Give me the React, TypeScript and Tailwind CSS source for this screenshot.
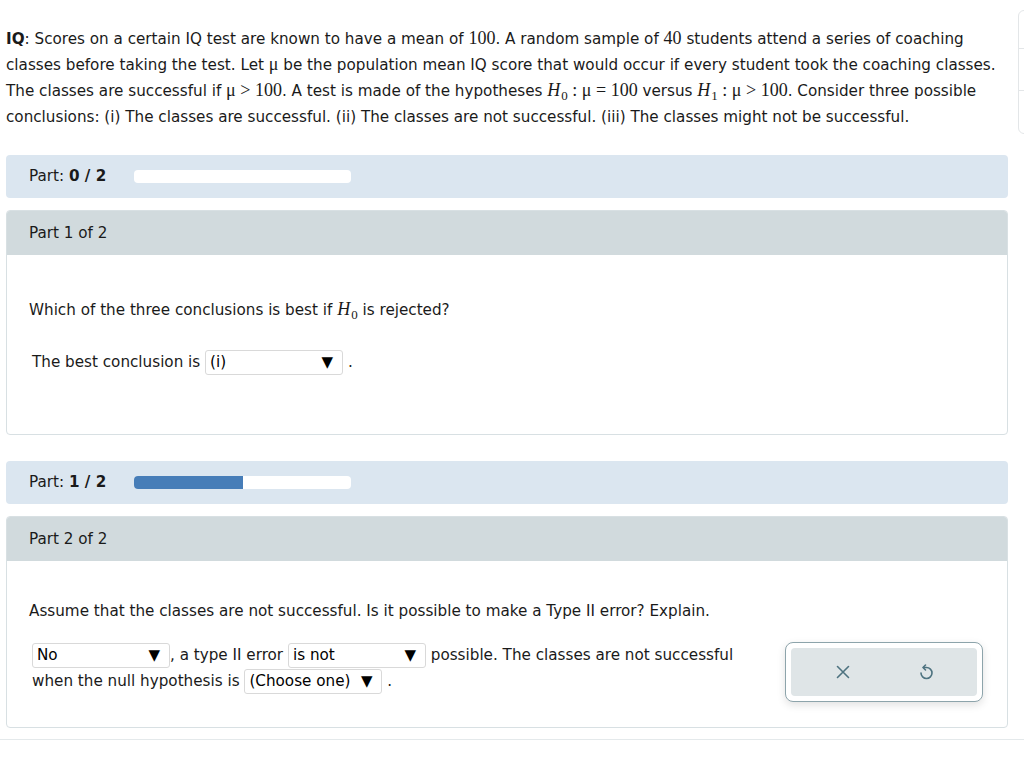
import React from "react";

const serif = "font-['Liberation_Serif',serif] text-[18px] leading-none";

function M({ children }: { children: React.ReactNode }) {
  return <span className={serif}>{children}</span>;
}

function H({ sub }: { sub: string }) {
  return (
    <span className={`${serif} italic whitespace-nowrap`}>
      H<sub className="not-italic text-[13px] leading-none relative top-[4px] align-baseline ml-[1px]">{sub}</sub>
    </span>
  );
}

function Select({ value, w = "w-[138px]" }: { value: string; w?: string }) {
  return (
    <span
      className={`inline-flex ${w} h-[25px] items-center justify-between align-middle rounded-[3px] border border-[#d9d9d9] bg-white pl-[4px] pr-[9px] text-[15.2px] leading-none text-black`}
    >
      <span>{value}</span>
      <span className="text-[15px]">▼</span>
    </span>
  );
}

function PartBar({ done }: { done: number }) {
  return (
    <div className="flex h-[43px] items-center rounded-[4px] bg-[#dbe6f0] pl-[23px]">
      <div className="w-[105px] text-[#1a1a1a]">
        Part: <b>{done} / 2</b>
      </div>
      <div className="flex h-[13px] w-[217px] overflow-hidden rounded-[4px] bg-white">
        <div className="h-full bg-[#467db8]" style={{ width: `${(done / 2) * 100}%` }} />
      </div>
    </div>
  );
}

function Card({ title, children }: { title: string; children: React.ReactNode }) {
  return (
    <div className="mt-[12px] overflow-hidden rounded-[4px] border border-[#d8e0e3]">
      <div className="flex h-[44px] items-center bg-[#d1dadd] pl-[22px] text-[#1a1a1a]">{title}</div>
      {children}
    </div>
  );
}

function UndoIcon() {
  return (
    <svg width="17" height="18" viewBox="0 0 17 18" fill="none" stroke="#4e7380" strokeWidth="1.6" strokeLinecap="round" strokeLinejoin="round">
      <path d="M6.5 4.5 H9.5 A5.5 5.5 0 1 1 4 10" />
      <path d="M8.5 2 L6 4.5 L8.5 7" />
    </svg>
  );
}

function CloseIcon() {
  return (
    <svg width="14" height="14" viewBox="0 0 14 14" fill="none" stroke="#4e7380" strokeWidth="1.6" strokeLinecap="round">
      <path d="M1.5 1.5 L12.5 12.5 M12.5 1.5 L1.5 12.5" />
    </svg>
  );
}

export default function App() {
  return (
    <div className="w-[1024px] overflow-hidden bg-white font-['DejaVu_Sans','Verdana',sans-serif] text-[15.2px] text-[#1a1a1a]">
      <div className="flex pt-[10px]">
        <main className="ml-[6px] w-[1002px] shrink-0 pt-[16px]">
          <p className="whitespace-nowrap leading-[26px]">
            <b>IQ</b>: Scores on a certain IQ test are known to have a mean of <M>100</M>. A random sample of <M>40</M>{" "}
            students attend a series of coaching
            <br />
            classes before taking the test. Let <M>μ</M> be the population mean IQ score that would occur if every
            student took the coaching classes.
            <br />
            The classes are successful if <M>μ &gt; 100</M>. A test is made of the hypotheses <H sub="0" />
            <M> : μ = 100</M> versus <H sub="1" />
            <M> : μ &gt; 100</M>. Consider three possible
            <br />
            conclusions: (i) The classes are successful. (ii) The classes are not successful. (iii) The classes might
            not be successful.
          </p>

          <div className="mt-[25px]">
            <PartBar done={0} />
          </div>

          <Card title="Part 1 of 2">
            <div className="px-[22px] pb-[59px] pt-[45px]">
              <p className="leading-[20px]">
                Which of the three conclusions is best if <H sub="0" /> is rejected?
              </p>
              <p className="mt-[29px] pl-[3px] leading-[26px]">
                The best conclusion is <Select value="(i)" /> .
              </p>
            </div>
          </Card>

          <div className="mt-[26px]">
            <PartBar done={1} />
          </div>

          <Card title="Part 2 of 2">
            <div className="px-[22px] pb-[25px] pt-[40px]">
              <p className="leading-[20px]">
                Assume that the classes are not successful. Is it possible to make a Type II error? Explain.
              </p>
              <div className="mt-[21px] flex items-start pl-[3px]">
                <p className="w-[730px] shrink-0 leading-[26px]">
                  <Select value="No" />, a type II error <Select value="is not" /> possible. The classes are not
                  successful when the null hypothesis is <Select value="(Choose one)" /> .
                </p>
                <div className="ml-[23px] rounded-[8px] border border-[#8da4ab] bg-white p-[5px] shadow-[0_3px_8px_rgba(0,0,0,0.12)]">
                  <div className="flex h-[48px] w-[186px] items-center justify-around rounded-[4px] bg-[#dfe5e7] px-[10px]">
                    <button className="flex h-[30px] w-[40px] items-center justify-center">
                      <CloseIcon />
                    </button>
                    <button className="flex h-[30px] w-[40px] items-center justify-center">
                      <UndoIcon />
                    </button>
                  </div>
                </div>
              </div>
            </div>
          </Card>
        </main>

        <aside className="ml-[10px] flex h-[124px] w-[200px] shrink-0 flex-col rounded-[6px] border border-[#e3e6e8]">
          <div className="h-[38px] border-b border-[#e3e6e8]" />
          <div className="h-[42px] border-b border-[#e3e6e8]" />
        </aside>
      </div>
      <div className="mt-[11px] h-[35px] border-t border-[#e4e9eb]" />
    </div>
  );
}
